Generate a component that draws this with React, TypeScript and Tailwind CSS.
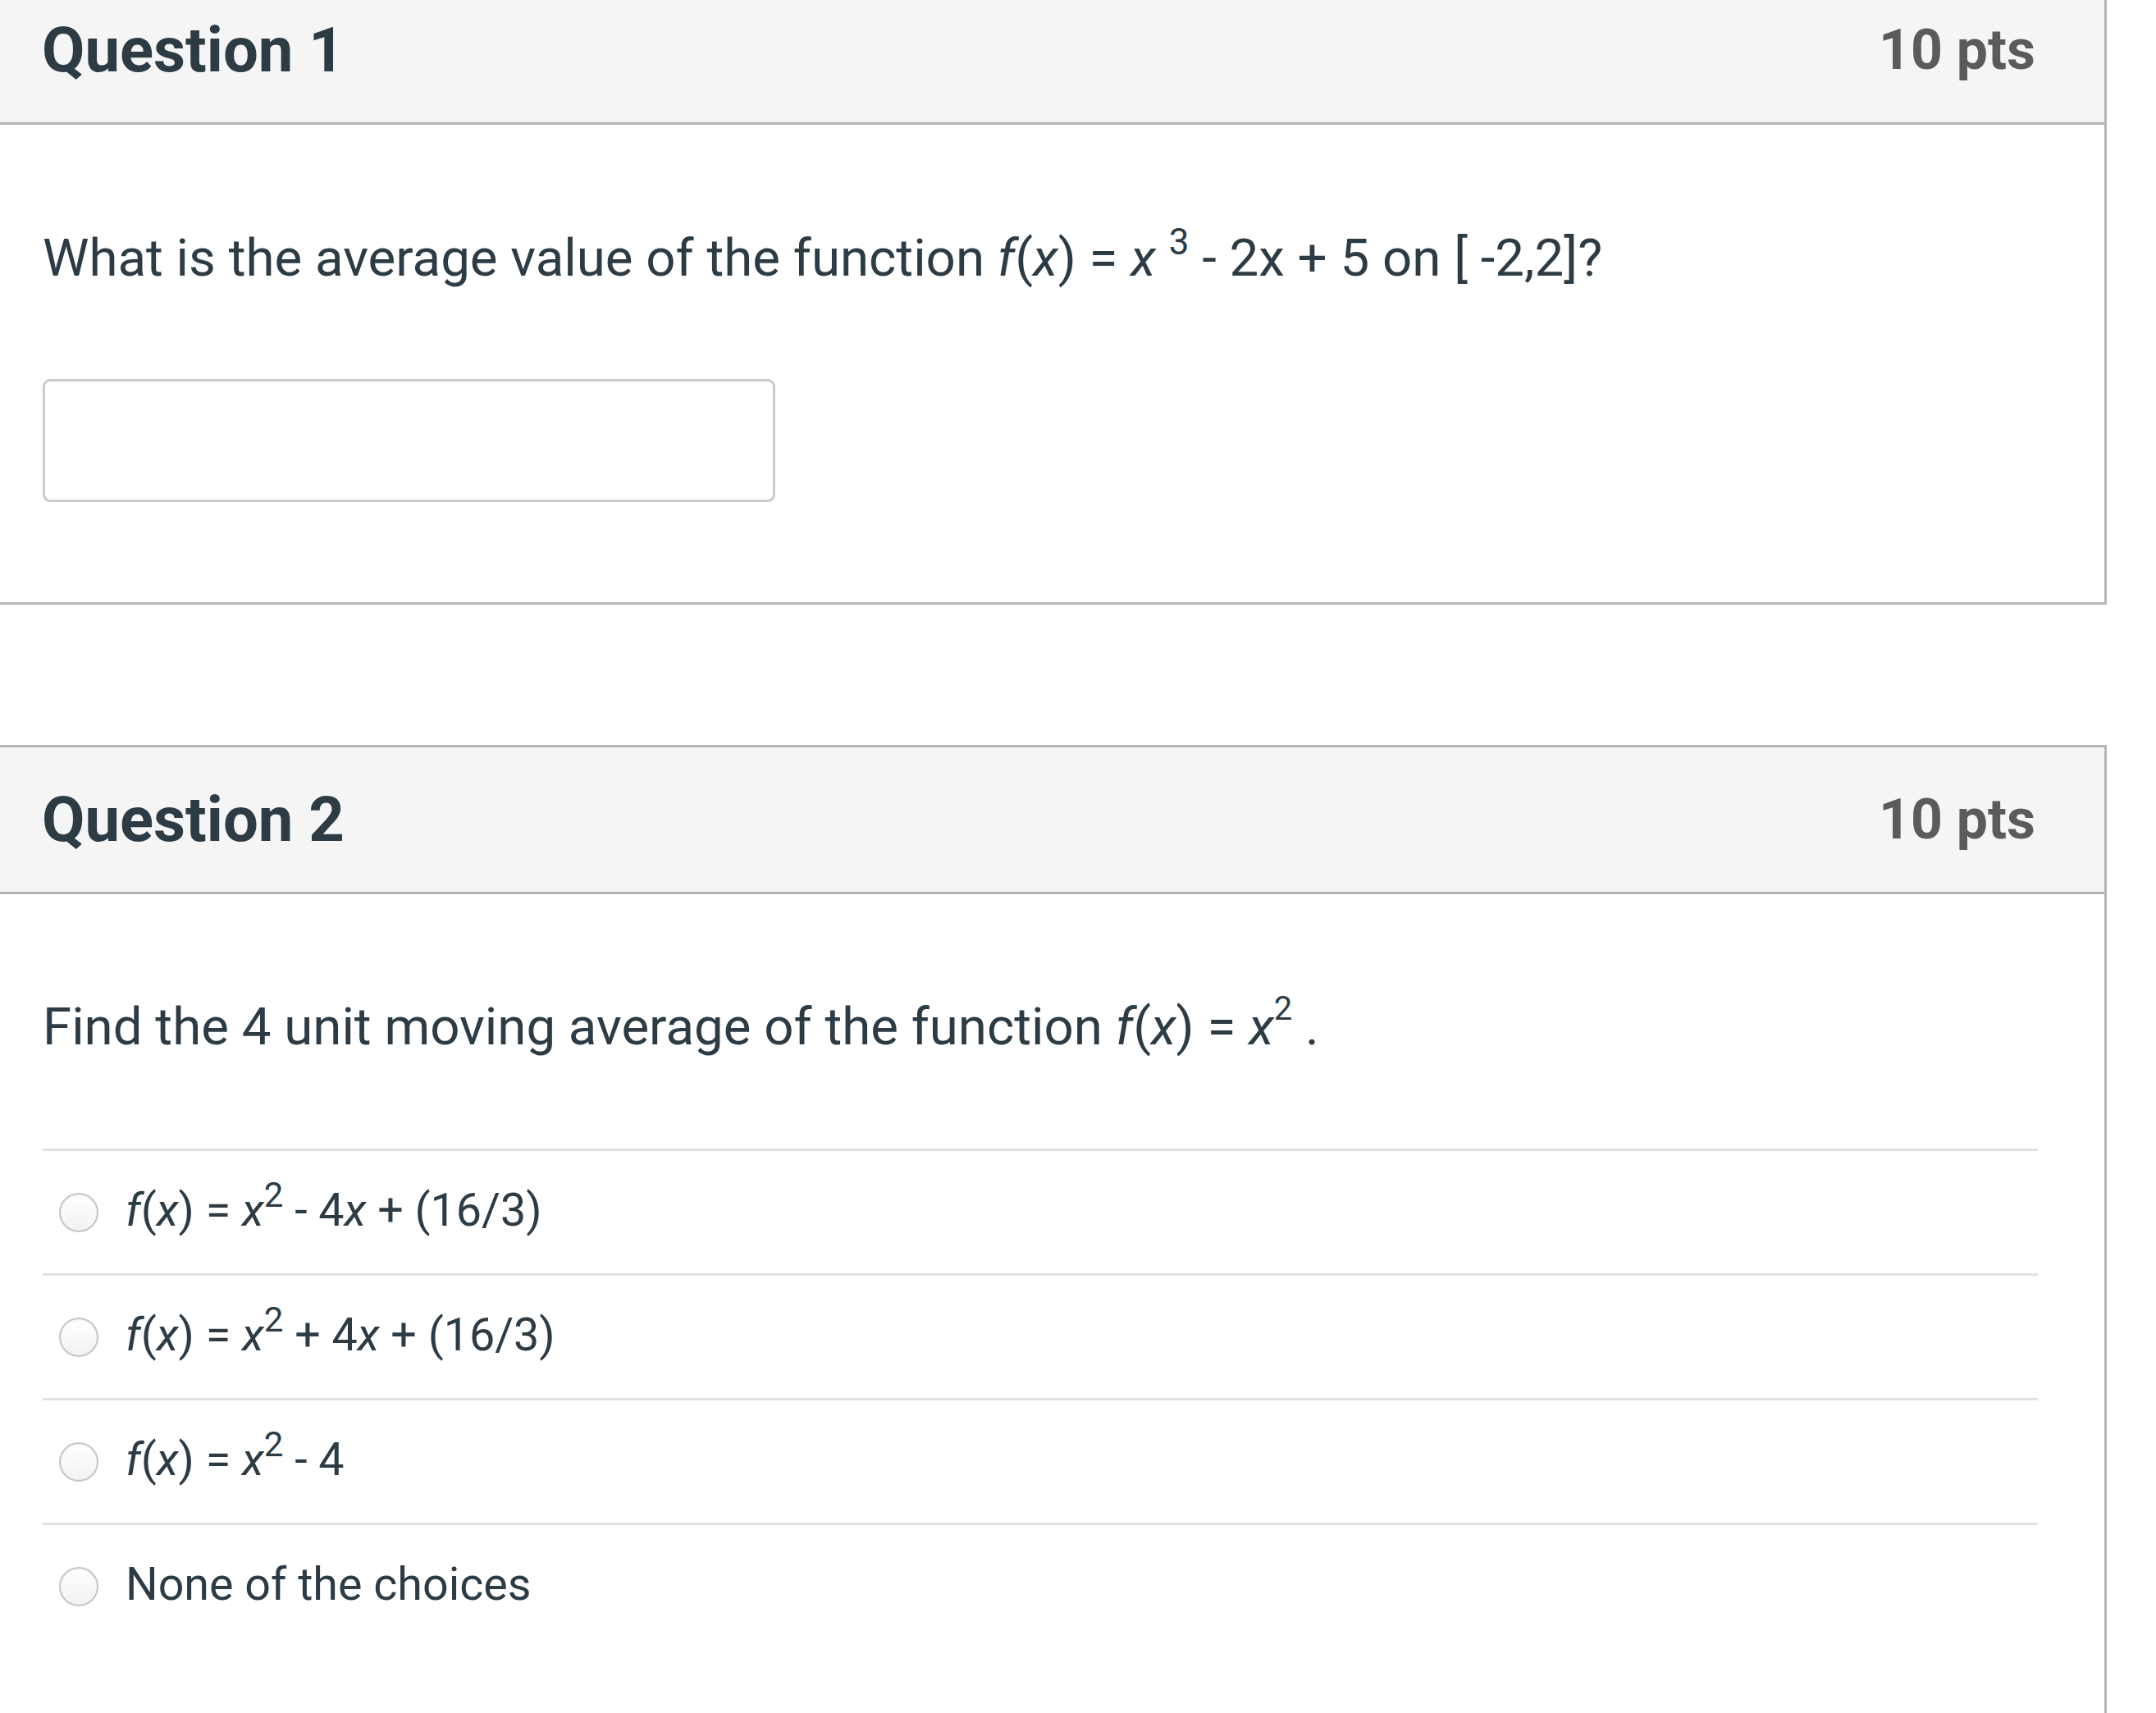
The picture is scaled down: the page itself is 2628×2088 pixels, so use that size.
import React from "react";

const Radio = () => (
  <span className="block w-[48px] h-[48px] shrink-0 rounded-full border-[2px] border-[#c6c6c6] bg-gradient-to-b from-[#ffffff] to-[#f2f2f2] shadow-[inset_0_1px_2px_rgba(0,0,0,0.06)]" />
);

const Header = ({ title }: { title: string }) => (
  <div className="h-[179px] bg-[#f5f5f5] border-b-[3px] border-[#b5b5b5] flex items-center justify-between pl-[51px] pr-[84px]">
    <h2 className="text-[76px] font-bold text-[#2d3b45] leading-none">{title}</h2>
    <div className="text-[68px] font-bold text-[#5b5b5b] leading-none">10 pts</div>
  </div>
);

const options: React.ReactNode[] = [
  <>
    <i>f</i>(<i>x</i>) = <i>x</i>
    <sup className="text-[42px] top-[-0.55em]">2</sup> - 4<i>x</i> + (16/3)
  </>,
  <>
    <i>f</i>(<i>x</i>) = <i>x</i>
    <sup className="text-[42px] top-[-0.55em]">2</sup> + 4<i>x</i> + (16/3)
  </>,
  <>
    <i>f</i>(<i>x</i>) = <i>x</i>
    <sup className="text-[42px] top-[-0.55em]">2</sup> - 4
  </>,
  <>None of the choices</>,
];

export default function App() {
  return (
    <div className="w-[2628px] h-[2088px] overflow-hidden bg-white font-['Roboto',sans-serif] text-[#2d3b45]">
      {/* Question 1 */}
      <section className="w-[2568px] -mt-[30px] border-y-[3px] border-r-[3px] border-[#b5b5b5]">
        <Header title="Question 1" />
        <div className="pl-[52px] pt-[116px] pb-[122px]">
          <p className="text-[63.6px] leading-[94px]">
            What is the average value of the function <i>f</i>(<i>x</i>) = <i>x</i>{" "}
            <sup className="text-[44px] top-[-0.6em]">3</sup> - 2x + 5 on [ -2,2]?
          </p>
          <div className="mt-[100px] w-[893px] h-[150px] rounded-[9px] border-[3px] border-[#cbcbcb] bg-white" />
        </div>
      </section>

      {/* Question 2 */}
      <section className="w-[2568px] mt-[171px] border-y-[3px] border-r-[3px] border-[#b5b5b5]">
        <Header title="Question 2" />
        <div className="pl-[52px] pr-[81px] pt-[115px] pb-[120px]">
          <p className="text-[63.6px] leading-[94px]">
            Find the 4 unit moving average of the function <i>f</i>(<i>x</i>) = <i>x</i>
            <sup className="text-[40px] top-[-0.75em]">2</sup> .
          </p>
          <div className="mt-[101px]">
            {options.map((o, i) => (
              <div
                key={i}
                className="h-[152px] border-t-[3px] border-[#e1e1e1] flex items-center pl-[20px] gap-[33px]"
              >
                <Radio />
                <span className="text-[55.6px] leading-none text-[#2d3b45] -mt-[4px]">{o}</span>
              </div>
            ))}
          </div>
        </div>
      </section>
    </div>
  );
}
